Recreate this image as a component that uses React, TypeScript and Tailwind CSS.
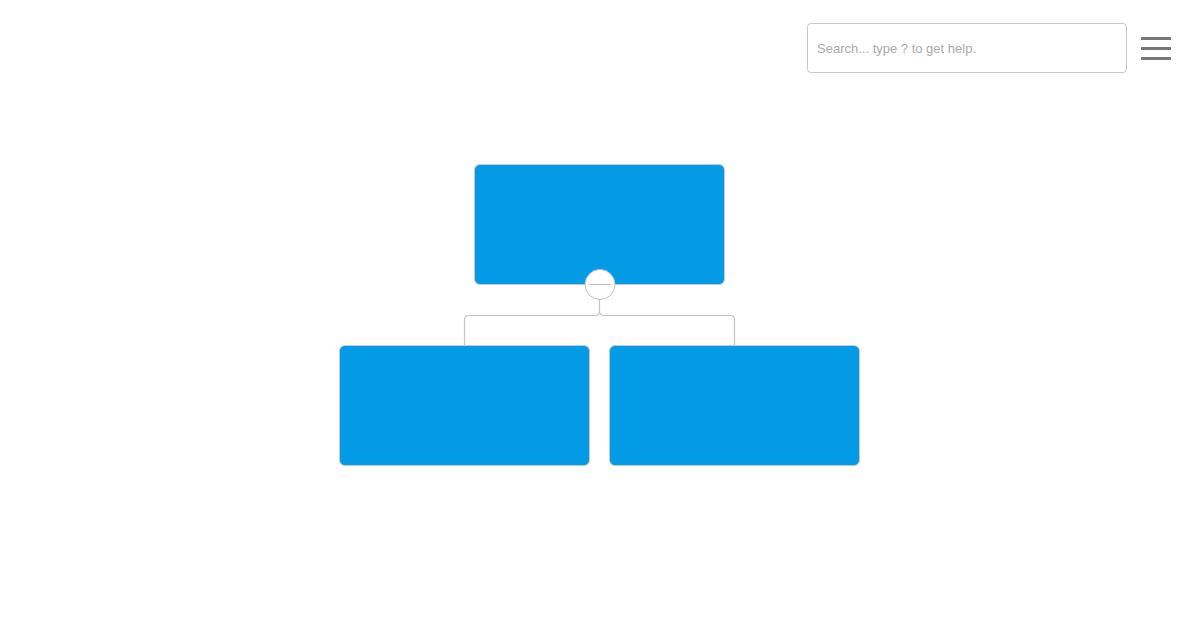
import React from 'react';

const Node: React.FC = () => (
  <div className="w-[251px] h-[121px] rounded-[6px] border border-[#c8c8c8] bg-[#039be5]" />
);

export default function App() {
  return (
    <div className="relative w-[1200px] h-[630px] bg-white overflow-hidden font-['Liberation_Sans',Arial,sans-serif]">
      {/* Top bar */}
      <div className="flex justify-end items-center gap-[14px] pt-[23px] pr-[29px]">
        <input
          type="text"
          placeholder="Search... type ? to get help."
          className="w-[320px] h-[50px] rounded-[4px] border border-[#c8c8c8] pl-[9px] text-[13px] text-[#555] placeholder:text-[#aaa] outline-none"
        />
        <button className="flex flex-col gap-[7px] w-[30px]">
          <span className="block h-[3px] w-full bg-[#777]" />
          <span className="block h-[3px] w-full bg-[#777]" />
          <span className="block h-[3px] w-full bg-[#777]" />
        </button>
      </div>

      {/* Org chart canvas */}
      <div className="absolute left-[339px] top-[164px] w-[521px] flex flex-col items-center">
        <div className="relative">
          <Node />
          <div className="absolute left-1/2 -translate-x-1/2 top-[105px] w-[31px] h-[31px] rounded-full border border-[#c0c0c0] bg-white flex items-center justify-center">
            <span className="block w-[21px] h-[1px] bg-[#bdbdbd]" />
          </div>
        </div>
        <svg width="521" height="60" viewBox="0 0 521 60" className="block">
          <path
            d="M260.5 14 V26 Q260.5 30.5 256 30.5 H130 Q125.5 30.5 125.5 35 V60"
            fill="none"
            stroke="#c4c4c4"
            strokeWidth="1.2"
          />
          <path
            d="M260.5 26 Q260.5 30.5 265 30.5 H391 Q395.5 30.5 395.5 35 V60"
            fill="none"
            stroke="#c4c4c4"
            strokeWidth="1.2"
          />
        </svg>
        <div className="flex gap-[19px]">
          <Node />
          <Node />
        </div>
      </div>
    </div>
  );
}
